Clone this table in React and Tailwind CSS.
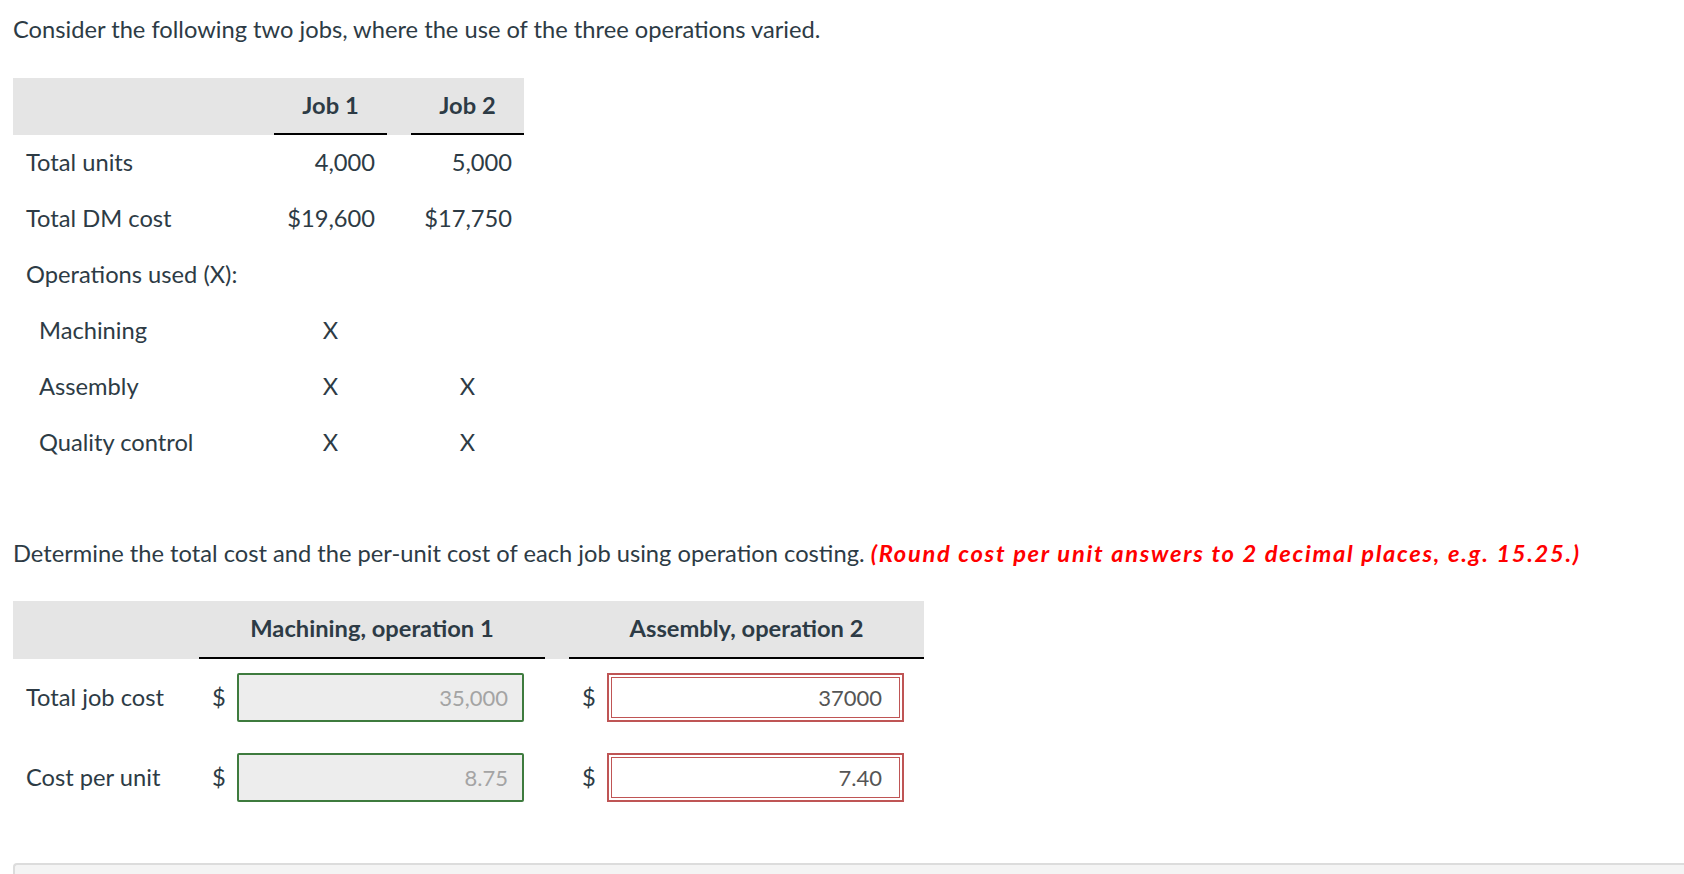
export default function App() {
  const jobRows = [
    { label: "Total units", indent: false, a: "4,000", b: "5,000", align: "right" },
    { label: "Total DM cost", indent: false, a: "$19,600", b: "$17,750", align: "right" },
    { label: "Operations used (X):", indent: false, a: "", b: "", align: "right" },
    { label: "Machining", indent: true, a: "X", b: "", align: "center" },
    { label: "Assembly", indent: true, a: "X", b: "X", align: "center" },
    { label: "Quality control", indent: true, a: "X", b: "X", align: "center" },
  ]

  return (
    <div className="min-h-screen overflow-hidden bg-white pl-[13px] font-['Lato','Noto_Sans',sans-serif] text-[23.7px] text-[#2d3b45]">
      <p className="h-[58px] whitespace-nowrap leading-[58px]">
        Consider the following two jobs, where the use of the three operations varied.
      </p>

      {/* jobs table */}
      <div className="mt-[20px] w-[511px]">
        <div className="flex h-[57px] gap-[24px] bg-[#e5e5e5] font-bold">
          <div className="w-[237px]" />
          <div className="flex w-[113px] items-center justify-center border-b-2 border-black">Job 1</div>
          <div className="flex w-[113px] items-center justify-center border-b-2 border-black">Job 2</div>
        </div>
        {jobRows.map((r) => (
          <div key={r.label} className="flex h-[56px] items-center gap-[24px]">
            <div className={`w-[237px] whitespace-nowrap ${r.indent ? "pl-[26px]" : "pl-[13px]"}`}>{r.label}</div>
            <div className={`w-[113px] ${r.align === "center" ? "text-center" : "pr-[12px] text-right"}`}>{r.a}</div>
            <div className={`w-[113px] ${r.align === "center" ? "text-center" : "pr-[12px] text-right"}`}>{r.b}</div>
          </div>
        ))}
      </div>

      <p className="mt-[53px] h-[58px] whitespace-nowrap leading-[58px]">
        Determine the total cost and the per-unit cost of each job using operation costing.{" "}
        <span className="font-bold italic tracking-[1.7px] text-[#f00]">
          (Round cost per unit answers to 2 decimal places, e.g. 15.25.)
        </span>
      </p>

      {/* answer table */}
      <div className="mt-[19px] w-[911px]">
        <div className="flex h-[58px] gap-[24px] bg-[#e5e5e5] font-bold">
          <div className="w-[162px]" />
          <div className="flex w-[346px] items-center justify-center border-b-2 border-black">Machining, operation 1</div>
          <div className="flex w-[355px] items-center justify-center border-b-2 border-black">Assembly, operation 2</div>
        </div>
        {[
          { label: "Total job cost", a: "35,000", b: "37000" },
          { label: "Cost per unit", a: "8.75", b: "7.40" },
        ].map((r) => (
          <div key={r.label} className="flex h-[80px] gap-[24px] pt-[14px]">
            <div className="flex h-[49px] w-[162px] items-center whitespace-nowrap pl-[13px]">{r.label}</div>
            <div className="flex w-[346px] pl-[13px]">
              <span className="flex h-[49px] w-[25px] items-center">$</span>
              <div className="flex h-[49px] w-[287px] items-center justify-end rounded-[2px] border-2 border-[#3e7b3e] bg-[#ededed] pr-[14px] text-[22px] text-[#a4a4a4]">
                {r.a}
              </div>
            </div>
            <div className="flex w-[355px] pl-[13px]">
              <span className="flex h-[49px] w-[25px] items-center">$</span>
              <div className="h-[49px] w-[297px] border-2 border-[#bf5555] bg-white p-[2px]">
                <div className="flex h-full items-center justify-end border-[1.5px] border-[#bf5555] pr-[17px] text-[22px] text-[#555]">
                  {r.b}
                </div>
              </div>
            </div>
          </div>
        ))}
      </div>

      <div className="mt-[44px] h-[40px] w-[calc(100%+20px)] rounded-tl-[4px] border-l-2 border-t-2 border-[#dcdcdc] bg-[#f4f4f4]" />
    </div>
  )
}
